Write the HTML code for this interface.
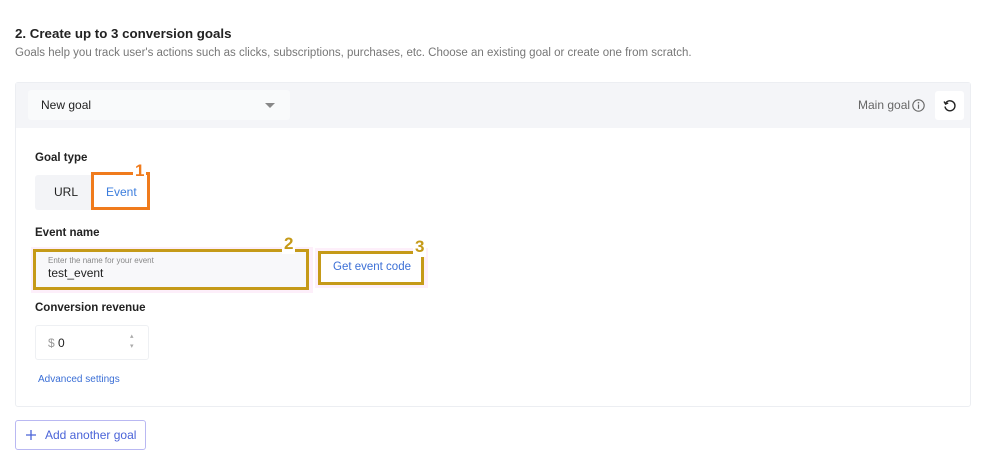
<!DOCTYPE html>
<html><head><style>
*{box-sizing:border-box;margin:0;padding:0}
body{width:982px;height:459px;background:#fff;font-family:"Liberation Sans",sans-serif;position:relative;overflow:hidden;color:#222}
.a{position:absolute}
</style></head><body>
<div class="a" style="left:15px;top:26px;font-size:13.3px;font-weight:bold;color:#222">2. Create up to 3 conversion goals</div>
<div class="a" style="left:15px;top:47px;font-size:11.5px;color:#777">Goals help you track user's actions such as clicks, subscriptions, purchases, etc. Choose an existing goal or create one from scratch.</div>

<div class="a" style="left:15px;top:82px;width:956px;height:325px;border:1px solid #eceef2;border-radius:3px"></div>
<div class="a" style="left:16px;top:83px;width:954px;height:45px;background:#f4f5f8"></div>
<div class="a" style="left:28px;top:90px;width:262px;height:30px;background:#f9fafb;border-radius:3px"></div>
<div class="a" style="left:41px;top:98px;font-size:12px">New goal</div>
<div class="a" style="left:265px;top:103px;width:0;height:0;border-left:5px solid transparent;border-right:5px solid transparent;border-top:5px solid #888"></div>
<div class="a" style="left:858px;top:98px;font-size:12px;color:#666">Main goal</div>
<svg class="a" style="left:912px;top:99px" width="13" height="13" viewBox="0 0 13 13"><circle cx="6.5" cy="6.5" r="5.7" fill="none" stroke="#666" stroke-width="1.1"/><line x1="6.5" y1="5.5" x2="6.5" y2="9.8" stroke="#666" stroke-width="1.2"/><circle cx="6.5" cy="3.7" r=".8" fill="#666"/></svg>
<div class="a" style="left:935px;top:91px;width:29px;height:29px;background:#fff;border-radius:3px"></div>
<svg class="a" style="left:943px;top:99px" width="13" height="13" viewBox="0 0 13 13"><path d="M2.5 4.5A5 5 0 1 1 2 7.5" fill="none" stroke="#222" stroke-width="1.4"/><path d="M1 2.5L2.6 5.2L5.2 3.9" fill="none" stroke="#222" stroke-width="1.3"/></svg>

<div class="a" style="left:35px;top:152px;font-size:11.5px;font-weight:bold">Goal type</div>
<div class="a" style="left:35px;top:175px;width:115px;height:35px;background:#f3f4f7;border-radius:3px"></div>
<div class="a" style="left:54px;top:185px;font-size:12px">URL</div>
<div class="a" style="left:91px;top:172px;width:59px;height:38px;background:#fff;border:3px solid #f07b1c"></div>
<div class="a" style="left:106px;top:185px;font-size:12px;color:#3b7ddd">Event</div>
<div class="a" style="left:133px;top:161px;font-size:17px;font-weight:bold;color:#f07b1c;background:#fff;padding:0 2px">1</div>

<div class="a" style="left:35px;top:227px;font-size:11.5px;font-weight:bold">Event name</div>
<div class="a" style="left:31px;top:247px;width:282px;height:46px;background:#fdeffa"></div>
<div class="a" style="left:33px;top:249px;width:276px;height:41px;background:#f8f8fa;border:3px solid #c59a18"></div>
<div class="a" style="left:48px;top:256px;font-size:8px;color:#888">Enter the name for your event</div>
<div class="a" style="left:48px;top:266px;font-size:12px">test_event</div>
<div class="a" style="left:282px;top:234px;font-size:17px;font-weight:bold;color:#c59a18;background:#fff;padding:0 2px">2</div>
<div class="a" style="left:315px;top:248px;width:113px;height:40px;background:#fdeffa"></div>
<div class="a" style="left:318px;top:251px;width:106px;height:34px;background:#fff;border:3px solid #c59a18"></div>
<div class="a" style="left:333px;top:261px;font-size:11.5px;color:#3b6fd6">Get event code</div>
<div class="a" style="left:413px;top:237px;font-size:17px;font-weight:bold;color:#c59a18;background:#fff;padding:0 2px">3</div>

<div class="a" style="left:35px;top:302px;font-size:11.5px;font-weight:bold">Conversion revenue</div>
<div class="a" style="left:35px;top:325px;width:114px;height:35px;border:1px solid #eef0f3;border-radius:3px"></div>
<div class="a" style="left:48px;top:336px;font-size:12px"><span style="color:#999">$</span> 0</div>
<div class="a" style="left:130px;top:332px;font-size:7px;color:#aaa;line-height:10px">▴<br>▾</div>
<div class="a" style="left:38px;top:374px;font-size:10px;color:#3b6fd6">Advanced settings</div>

<div class="a" style="left:15px;top:420px;width:131px;height:30px;border:1px solid #b9b8f2;border-radius:3px"></div>
<svg class="a" style="left:25px;top:429px" width="12" height="12" viewBox="0 0 12 12"><path d="M6 1V11M1 6H11" stroke="#4a63d8" stroke-width="1.3"/></svg>
<div class="a" style="left:45px;top:428px;font-size:12px;color:#4a63d8">Add another goal</div>
</body></html>
